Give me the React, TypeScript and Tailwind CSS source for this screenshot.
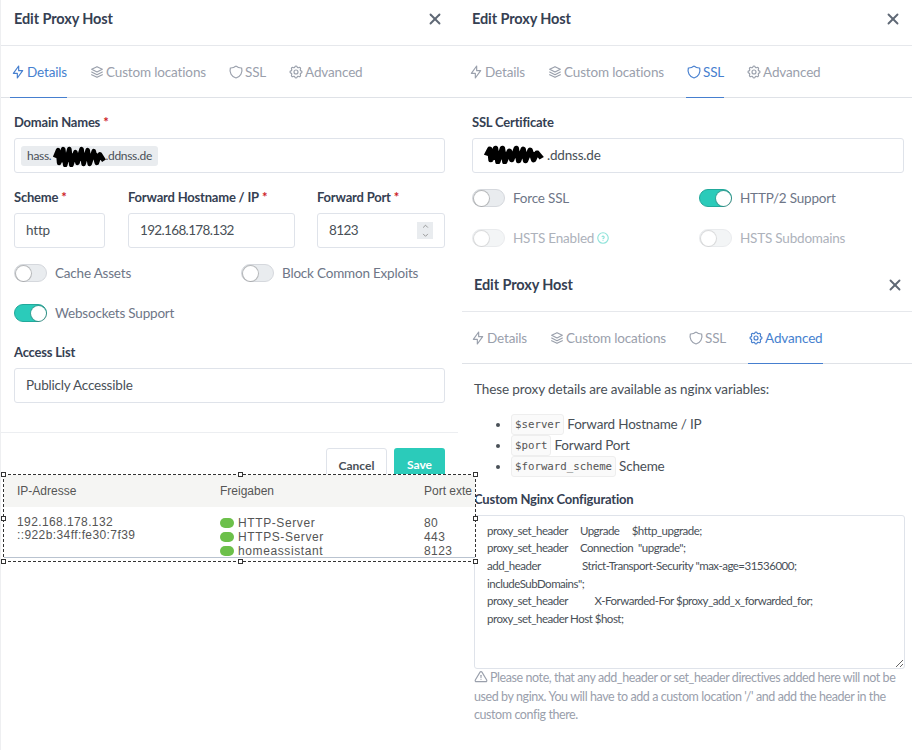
import type { ReactNode } from 'react';
import {
  TbAlertTriangle,
  TbBolt,
  TbChevronDown,
  TbChevronUp,
  TbHelpCircle,
  TbSettings,
  TbShield,
  TbStack2,
  TbX,
} from 'react-icons/tb';

const tabs = [
  { name: 'Details', icon: TbBolt },
  { name: 'Custom locations', icon: TbStack2 },
  { name: 'SSL', icon: TbShield },
  { name: 'Advanced', icon: TbSettings },
];

const nginxConfig = `proxy_set_header     Upgrade     $http_upgrade;
proxy_set_header     Connection  "upgrade";
add_header                 Strict-Transport-Security "max-age=31536000;
includeSubDomains";
proxy_set_header           X-Forwarded-For $proxy_add_x_forwarded_for;
proxy_set_header Host $host;`;

function Header({ className, closeClass }: { className: string; closeClass: string }) {
  return (
    <div className={`h-[46px] pb-[8px] flex items-center justify-between border-b border-[#e6e8ec] ${className}`}>
      <h2 className="text-[14.5px] tracking-[-0.1px] font-bold text-[#354052]">Edit Proxy Host</h2>
      <TbX className={`text-[#5f6875] ${closeClass}`} size={18} strokeWidth={2.5} />
    </div>
  );
}

function Tabs({ active, className }: { active: string; className: string }) {
  return (
    <div className={`h-[52px] flex gap-[22px] border-b border-[#dfe2e7] ${className}`}>
      {tabs.map((tab) => {
        const Icon = tab.icon;
        const on = tab.name === active;
        return (
          <div
            key={tab.name}
            className={`h-[52px] pt-[1px] flex items-center gap-[1px] border-b text-[13.5px] tracking-[-0.15px] ${
              on ? 'border-[#467fcf] text-[#467fcf]' : 'border-transparent text-[#9aa0ac]'
            }`}
          >
            <Icon size={16} strokeWidth={1.75} />
            <span>{tab.name}</span>
          </div>
        );
      })}
    </div>
  );
}

function Label({ children, required }: { children: ReactNode; required?: boolean }) {
  return (
    <div className="h-[16px] pt-[1px] flex items-center text-[13px] tracking-[-0.2px] font-bold text-[#354052] mb-[8px] whitespace-nowrap">
      {children}
      {required && <span className="ml-[3px] text-[#cd201f]">*</span>}
    </div>
  );
}

function Field({ children, className }: { children?: ReactNode; className?: string }) {
  return (
    <div className={`h-[35px] flex items-center bg-white border border-[#dfe3ea] rounded-[3px] text-[13.5px] tracking-[-0.2px] text-[#495057] ${className ?? 'px-[11px]'}`}>
      {children}
    </div>
  );
}

function Toggle({ label, on, faded, className }: { label: ReactNode; on?: boolean; faded?: boolean; className?: string }) {
  return (
    <div className={`h-[18px] flex items-center gap-[8px] text-[13.5px] tracking-[-0.2px] whitespace-nowrap ${faded ? 'text-[#adb2bb]' : 'text-[#6e7687]'} ${className ?? ''}`}>
      <div
        className={`w-[33px] h-[18px] rounded-full p-[0.5px] flex border ${
          on ? 'justify-end bg-[#2bcbba] border-[#22a99b]' : 'justify-start bg-[#e9ecef] border-[#d5d8dd]'
        } ${faded ? 'opacity-50' : ''}`}
      >
        <div className="w-[15px] h-[15px] rounded-full bg-white shadow-[0_0_0_1px_rgba(90,90,90,0.35)]" />
      </div>
      {label}
    </div>
  );
}

function Scribble({ className }: { className: string }) {
  return (
    <svg className={className} viewBox="0 0 52 20" fill="none" preserveAspectRatio="none">
      <path
        d="M2 11 L5 4 L6 16 L10 3 L12 18 L16 3 L18 18 L22 6 L24 16 L28 3 L30 17 L34 4 L36 17 L40 5 L43 16 L46 8 L50 14 M3 8 L49 11 M4 14 L48 9"
        stroke="#000"
        strokeWidth="4.5"
        strokeLinejoin="round"
      />
    </svg>
  );
}

function Handle({ className }: { className: string }) {
  return <div className={`absolute w-[5px] h-[5px] bg-white border border-[#333] ${className}`} />;
}

function ServiceRow({ name }: { name: string }) {
  return (
    <div className="h-[14px] flex items-center gap-[4px]">
      <div className="w-[14px] h-[10px] rounded-full bg-[#6cc04a]" />
      <span>{name}</span>
    </div>
  );
}

// pasted screenshot snippet that lies over the left panel
function Snippet() {
  return (
    <div className="absolute left-[3px] top-[474px] w-[473px] h-[88px] bg-white border border-dashed border-[#333] text-[12px] text-[#555] font-['Liberation_Sans',sans-serif]">
      <div className="h-[32px] bg-[#f5f5f3] flex items-center">
        <span className="ml-[13px] w-[203px]">IP-Adresse</span>
        <span className="w-[204px]">Freigaben</span>
        <span className="whitespace-nowrap">Port exte</span>
      </div>
      <div className="flex pt-[9px] h-[51px] border-b border-[#b9c3d0] tracking-[0.4px]">
        <div className="ml-[13px] w-[203px] leading-[13px]">
          <div>192.168.178.132</div>
          <div>::922b:34ff:fe30:7f39</div>
        </div>
        <div className="w-[204px] tracking-[0.6px]">
          <ServiceRow name="HTTP-Server" />
          <ServiceRow name="HTTPS-Server" />
          <ServiceRow name="homeassistant" />
        </div>
        <div>
          <div className="h-[14px] leading-[14px]">80</div>
          <div className="h-[14px] leading-[14px]">443</div>
          <div className="h-[14px] leading-[14px]">8123</div>
        </div>
      </div>
      <Handle className="-left-[3px] -top-[3px]" />
      <Handle className="left-[234px] -top-[3px]" />
      <Handle className="-right-[3px] -top-[3px]" />
      <Handle className="-left-[3px] top-[41px]" />
      <Handle className="-right-[3px] top-[41px]" />
      <Handle className="-left-[3px] -bottom-[3px]" />
      <Handle className="left-[234px] -bottom-[3px]" />
      <Handle className="-right-[3px] -bottom-[3px]" />
    </div>
  );
}

function DetailsPanel() {
  return (
    <div className="w-[458px] h-[750px] border-l border-[#eeeff1]">
      <Header className="pl-[13px]" closeClass="mr-[14px]" />
      <Tabs active="Details" className="pl-[9px]" />
      <div className="pt-[16px] pl-[13px] pr-[13px]">
        <Label required>Domain Names</Label>
        <Field className="px-[6px]">
          <div className="relative h-[20px] w-[137px] flex items-center justify-between px-[6px] rounded-[3px] bg-[#e9ecef] text-[12px] tracking-[-0.3px] text-[#495057]">
            <span>hass.</span>
            <span>.ddnss.de</span>
            <Scribble className="absolute left-[32px] top-[0px] w-[53px] h-[21px]" />
          </div>
        </Field>
        <div className="flex mt-[16px]">
          <div className="w-[91px]">
            <Label required>Scheme</Label>
            <Field>http</Field>
          </div>
          <div className="w-[167px] ml-[23px]">
            <Label required>Forward Hostname / IP</Label>
            <Field><span className="tracking-[-0.65px]">192.168.178.132</span></Field>
          </div>
          <div className="w-[128px] ml-[22px]">
            <Label required>Forward Port</Label>
            <Field className="justify-between pl-[11px] pr-[11px]">
              <span className="tracking-[-0.6px]">8123</span>
              <div className="w-[16px] h-[17px] bg-[#e9ecef] flex flex-col items-center justify-center text-[#777]">
                <TbChevronUp size={9} />
                <TbChevronDown size={9} />
              </div>
            </Field>
          </div>
        </div>
        <div className="flex mt-[16px]">
          <Toggle label="Cache Assets" className="w-[227px]" />
          <Toggle label="Block Common Exploits" />
        </div>
        <Toggle label="Websockets Support" on className="mt-[22px]" />
        <div className="mt-[22px]">
          <Label>Access List</Label>
          <Field>Publicly Accessible</Field>
        </div>
      </div>
      <div className="mt-[29px] border-t border-[#eceef1] pt-[15px] pr-[13px] flex justify-end gap-[7px]">
        <div className="w-[61px] h-[38px] pt-[8px] text-center border border-[#dfe3ea] rounded-[3px] text-[12px] font-bold text-[#495057]">Cancel</div>
        <div className="w-[51px] h-[38px] pt-[8px] text-center rounded-[3px] bg-[#2bcbba] text-[12px] font-bold text-white">Save</div>
      </div>
    </div>
  );
}

function SslPanel() {
  return (
    <div className="h-[266px]">
      <Header className="pl-[14px]" closeClass="mr-[10px]" />
      <Tabs active="SSL" className="pl-[10px]" />
      <div className="pt-[16px] pl-[14px] pr-[8px]">
        <Label>SSL Certificate</Label>
        <Field className="relative px-[11px]">
          <Scribble className="absolute left-[11px] top-[6px] w-[60px] h-[19px]" />
          <span className="ml-[63px]">.ddnss.de</span>
        </Field>
        <div className="flex mt-[16px]">
          <Toggle label="Force SSL" className="w-[227px]" />
          <Toggle label="HTTP/2 Support" on />
        </div>
        <div className="flex mt-[22px]">
          <Toggle
            faded
            className="w-[227px]"
            label={
              <span className="flex items-center gap-[2px]">
                HSTS Enabled
                <TbHelpCircle className="text-[#8fe3da]" size={14} />
              </span>
            }
          />
          <Toggle faded label="HSTS Subdomains" />
        </div>
      </div>
    </div>
  );
}

function CodeChip({ children }: { children: ReactNode }) {
  return (
    <code className="inline-block h-[21px] leading-[19px] align-top px-[3px] mr-[3px] bg-[#fafafa] border border-[#eee] rounded-[3px] text-[10.75px] tracking-normal text-[#555] font-['DejaVu_Sans_Mono',monospace]">
      {children}
    </code>
  );
}

function AdvancedPanel() {
  return (
    <div className="ml-[4px] h-[484px]">
      <Header className="pl-[12px]" closeClass="mr-[8px]" />
      <Tabs active="Advanced" className="pl-[8px]" />
      <div className="pl-[12px] pr-[7px] text-[13.5px] tracking-[-0.2px] text-[#495057]">
        <p className="mt-[16px] h-[18px] leading-[18px] tracking-[-0.1px]">These proxy details are available as nginx variables:</p>
        <ul className="mt-[16px] ml-[37px] list-disc leading-[21px]">
          <li className="h-[21px]"><CodeChip>$server</CodeChip>Forward Hostname / IP</li>
          <li className="h-[21px]"><CodeChip>$port</CodeChip>Forward Port</li>
          <li className="h-[21px]"><CodeChip>$forward_scheme</CodeChip>Scheme</li>
        </ul>
        <div className="mt-[14px]">
          <Label>Custom Nginx Configuration</Label>
        </div>
        <textarea
          readOnly
          defaultValue={nginxConfig}
          className="block w-[431px] h-[154px] px-[12px] pt-[5.5px] border border-[#dfe3ea] rounded-[3px] text-[11.5px] tracking-[-0.5px] leading-[17.7px] text-[#495057] outline-none resize-y whitespace-pre"
        />
        <p className="text-[12.5px] tracking-[-0.42px] leading-[18.6px] text-[#9aa0ac]">
          <TbAlertTriangle className="inline-block mr-[2px] -mt-[3px]" size={14} />
          Please note, that any add_header or set_header directives added here will not be used by nginx. You will have to add a custom location '/' and add the header in the custom config there.
        </p>
      </div>
    </div>
  );
}

export default function App() {
  return (
    <div className="relative w-[912px] h-[750px] flex overflow-hidden bg-white font-['Lato',sans-serif]">
      <DetailsPanel />
      <div className="flex-1">
        <SslPanel />
        <AdvancedPanel />
      </div>
      <Snippet />
    </div>
  );
}
